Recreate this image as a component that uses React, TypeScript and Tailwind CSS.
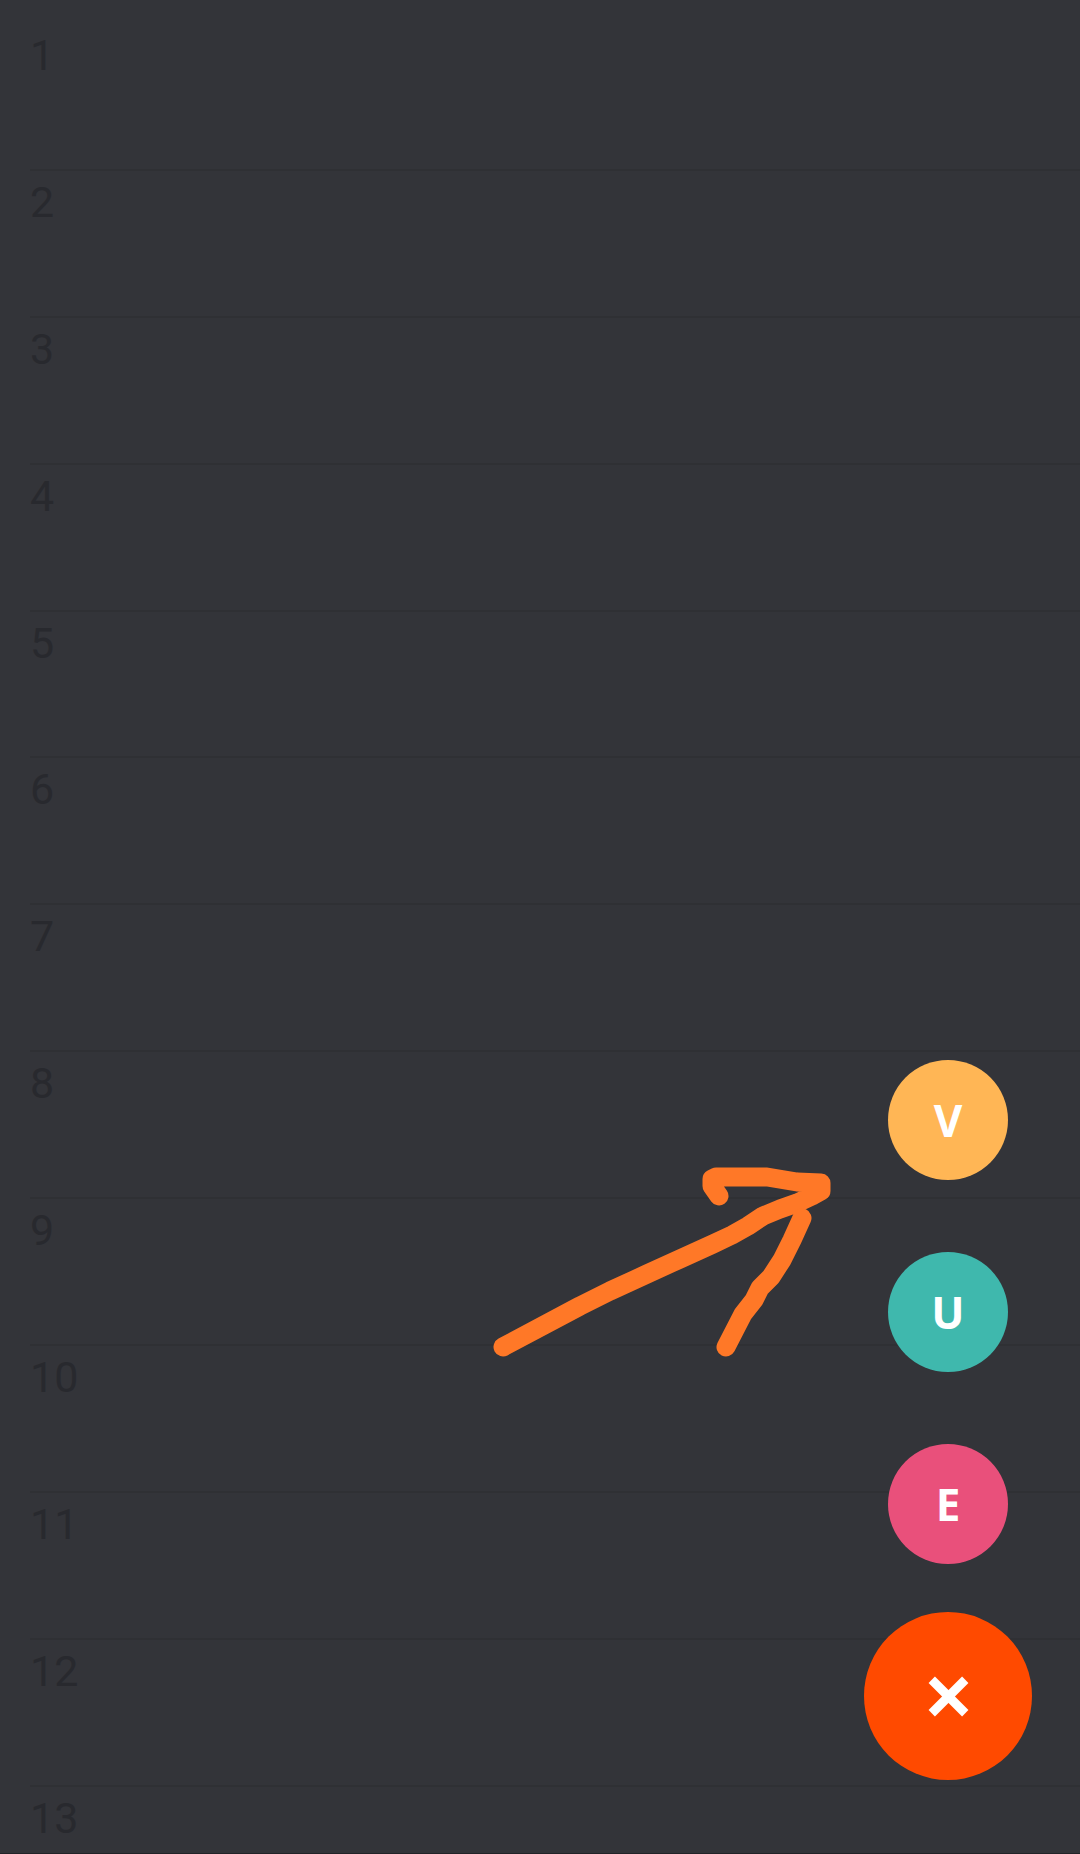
import { X } from 'lucide-react';

const rows = [1, 2, 3, 4, 5, 6, 7, 8, 9, 10, 11, 12, 13];

const actions = [
  { label: 'V', color: 'bg-[#ffb655]' },
  { label: 'U', color: 'bg-[#3fb8ad]' },
  { label: 'E', color: 'bg-[#e9507b]' },
];

function Scribble() {
  return (
    <svg
      className="absolute left-[480px] top-[1150px]"
      width="360"
      height="230"
      viewBox="480 1150 360 230"
      fill="none"
      stroke="#ff7827"
      strokeWidth="19"
      strokeLinecap="round"
      strokeLinejoin="round"
    >
      <path d="M503 1347 L580 1306 L610 1291 L647 1274 L680 1259 L713 1244 L732 1235 L748 1226 L763 1216 L780 1209 L797 1203 L812 1196 L821 1191 L821 1183 L797 1182 L785 1180 L767 1177 L716 1177 L712 1179 L712 1186 L719 1196" />
      <path d="M726 1347 L743 1314 L754 1300 L760 1288 L771 1277 L782 1260 L792 1240 L802 1218" />
    </svg>
  );
}

export default function App() {
  return (
    <div className="relative h-[1854px] w-[1080px] overflow-hidden bg-[#333439] font-['Roboto',sans-serif]">
      <div className="h-full border-b border-[#222327]">
        <div className="ml-[30px] pt-[24px]">
          {rows.map((row) => (
            <div key={row} className="h-[146.9px] border-b-2 border-[#2f3034]">
              <p className="text-[43px] leading-[62px] text-[#28292e]">{row}</p>
            </div>
          ))}
        </div>
      </div>

      <Scribble />

      {/* Speed dial */}
      <div className="absolute bottom-[74px] right-[48px] flex w-[168px] flex-col items-center">
        <div className="mb-[48px] flex flex-col gap-[72px]">
          {actions.map((action) => (
            <button
              key={action.label}
              className={`flex h-[120px] w-[120px] items-center justify-center rounded-full font-['Open_Sans',sans-serif] text-[44px] font-bold text-white ${action.color}`}
            >
              {action.label}
            </button>
          ))}
        </div>
        <button className="flex h-[168px] w-[168px] items-center justify-center rounded-full bg-[#ff4a00] text-white">
          <X size={67} strokeWidth={3.2} strokeLinecap="butt" />
        </button>
      </div>
    </div>
  );
}
